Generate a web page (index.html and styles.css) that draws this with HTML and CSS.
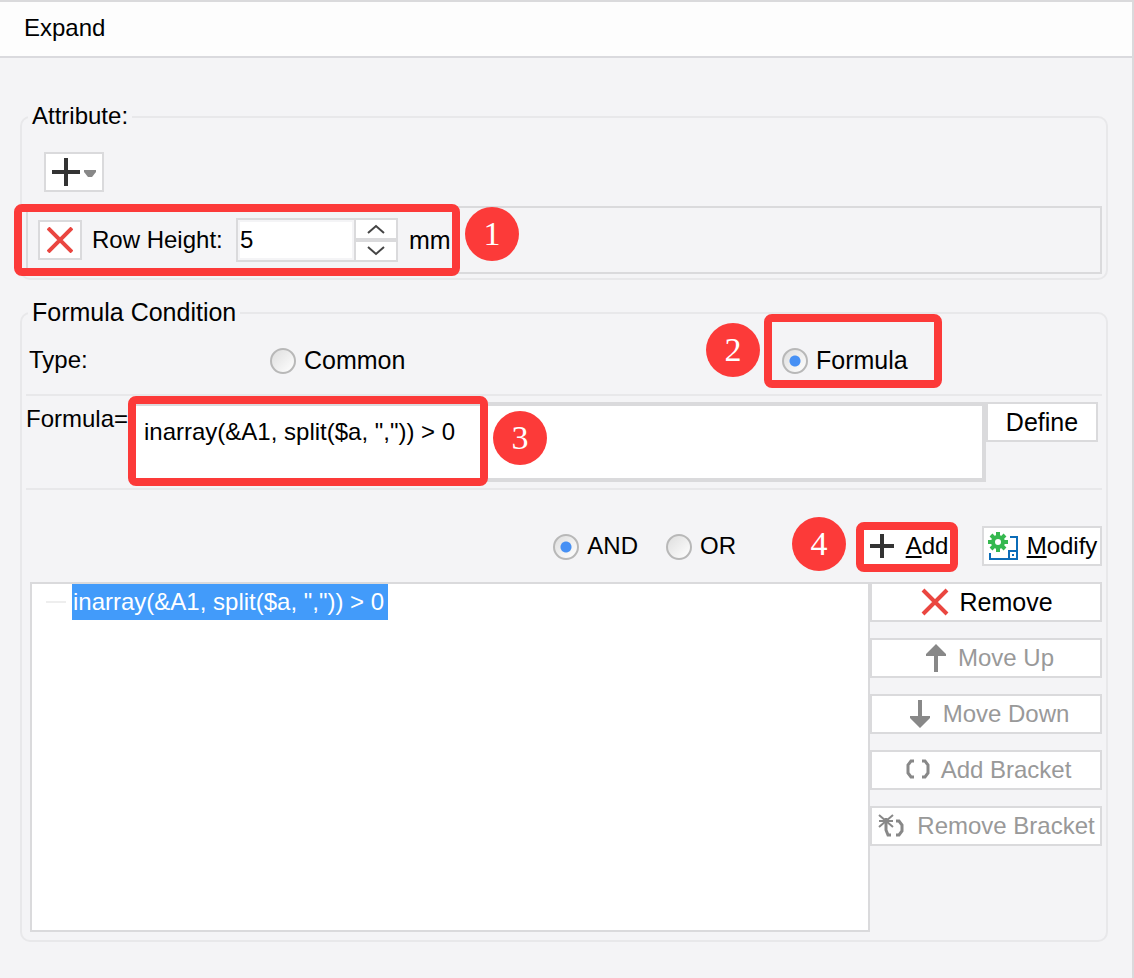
FILE: index.html
```html
<!DOCTYPE html>
<html lang="en">
<head>
<meta charset="utf-8">
<title>Expand</title>
<link rel="stylesheet" href="styles.css">
</head>
<body>
<main class="dialog">
  <header class="titlebar"><h1 class="title">Expand</h1></header>
  <form class="content">
    <fieldset class="group">
      <legend class="legend">Attribute:</legend>
      <div class="toolbar">
        <button type="button" class="btn btn-menu" aria-label="Add attribute">
          <svg width="28" height="28" viewBox="0 0 28 28"><path d="M14 0v28M0 14h28" stroke="#333" stroke-width="4"/></svg>
          <svg width="12" height="12" viewBox="0 0 12 12"><path d="M0 4h12v2l-4 5H4L0 6z" fill="#888"/></svg>
        </button>
      </div>
      <div class="attributes">
        <div class="attribute">
          <button type="button" class="btn btn-delete" aria-label="Delete row height">
            <svg width="26" height="26" viewBox="0 0 26 26"><path d="M1 1l24 24M25 1L1 25" stroke="#ea4640" stroke-width="4"/></svg>
          </button>
          <label class="attribute-label" for="row-height">Row Height:</label>
          <div class="spinner">
            <input class="spinner-input" id="row-height" type="text" value="5">
            <div class="spinner-buttons">
              <button type="button" class="step" aria-label="Increase"><svg width="18" height="10" viewBox="0 0 18 10"><path d="M1 9l8-7 8 7" fill="none" stroke="#444" stroke-width="2"/></svg></button>
              <button type="button" class="step" aria-label="Decrease"><svg width="18" height="10" viewBox="0 0 18 10"><path d="M1 1l8 7 8-7" fill="none" stroke="#444" stroke-width="2"/></svg></button>
            </div>
          </div>
          <span class="unit">mm</span>
          <span class="mark mark-attribute"></span>
          <span class="badge badge-attribute">1</span>
        </div>
      </div>
    </fieldset>

    <fieldset class="group group-fill">
      <legend class="legend wide">Formula Condition</legend>
      <div class="type-row" role="radiogroup" aria-labelledby="type-label">
        <span class="type-label" id="type-label">Type:</span>
        <label class="option wide"><input class="radio" type="radio" name="type">Common</label>
        <div class="anchor">
          <label class="option wide"><input class="radio" type="radio" name="type" checked>Formula</label>
          <span class="mark mark-type"></span>
          <span class="badge badge-type">2</span>
        </div>
      </div>

      <div class="formula-row">
        <label class="formula-label" for="formula">Formula=</label>
        <div class="formula-box">
          <textarea class="formula-input" id="formula" spellcheck="false">inarray(&amp;A1, split($a, ",")) &gt; 0</textarea>
          <span class="mark mark-formula"></span>
          <span class="badge badge-formula">3</span>
        </div>
        <button type="button" class="btn btn-define wide">Define</button>
      </div>

      <div class="join-row">
        <label class="option"><input class="radio" type="radio" name="join" checked>AND</label>
        <label class="option option-or"><input class="radio" type="radio" name="join">OR</label>
        <div class="anchor anchor-add">
          <button type="button" class="btn btn-add">
            <svg class="icon" viewBox="0 0 32 32"><path d="M16 4v24M4 16h24" stroke="#333" stroke-width="4"/></svg>
            <span><u>A</u>dd</span>
          </button>
          <span class="mark mark-add"></span>
          <span class="badge badge-add">4</span>
        </div>
        <button type="button" class="btn btn-modify">
          <svg class="icon" viewBox="0 0 32 32">
            <path d="M23 7h7v22H3v-6" fill="none" stroke="#0b6cb8" stroke-width="2"/>
            <path d="M22 21h8v8h-8z" fill="#fff" stroke="#0b6cb8" stroke-width="2"/>
            <path d="M25 24h2v2h-2z" fill="#0b6cb8"/>
            <g stroke="#35b84f" fill="none" stroke-width="4"><circle cx="11" cy="12" r="5"/><path d="M11 2v4M11 18v4M1 12h4M17 12h4M4 5l3 3M15 16l3 3M18 5l-3 3M7 16l-3 3"/></g>
          </svg>
          <span><u>M</u>odify</span>
        </button>
      </div>

      <div class="conditions">
        <ul class="tree" role="tree" aria-label="Conditions">
          <li class="node" role="treeitem" aria-selected="true"><span class="node-text">inarray(&amp;A1, split($a, ",")) &gt; 0</span></li>
        </ul>
        <div class="actions">
          <button type="button" class="btn wide">
            <svg class="icon" viewBox="0 0 32 32"><path d="M4 4l24 24M28 4L4 28" stroke="#ea4640" stroke-width="4"/></svg>Remove</button>
          <button type="button" class="btn" disabled>
            <svg class="icon" viewBox="0 0 32 32"><path d="M18 2l10 10v2h-8v16h-4V14H8v-2z" fill="#888"/></svg>Move Up</button>
          <button type="button" class="btn" disabled>
            <svg class="icon" viewBox="0 0 32 32"><path d="M17 30L7 20v-2h8V2h4v16h8v2z" fill="#888"/></svg>Move Down</button>
          <button type="button" class="btn" disabled>
            <svg class="icon" viewBox="0 0 32 32"><path d="M13 7h-3l-3 4v8l3 4h3M21 7h3l3 4v8l-3 4h-3" fill="none" stroke="#888" stroke-width="3"/></svg>Add Bracket</button>
          <button type="button" class="btn" disabled>
            <svg class="icon" viewBox="0 0 32 32"><path d="M2 5l14 12M16 5L2 17M2 11h14" fill="none" stroke="#888" stroke-width="2"/><path d="M9 8v12l2 5h3M19 11h3l3 4v6l-3 4h-3" fill="none" stroke="#888" stroke-width="3"/></svg>Remove Bracket</button>
        </div>
      </div>
    </fieldset>
  </form>
</main>
</body>
</html>
```
FILE: styles.css
```css
* { box-sizing: border-box; }

body {
  margin: 0;
  background: #f4f4f6;
  color: #000;
  font: 24px/28px "Liberation Sans", Arial, sans-serif;
}

button, input, textarea { font: inherit; color: inherit; }

svg { display: block; flex: none; }

.wide { font-size: 25px; }

.dialog {
  display: flex;
  flex-direction: column;
  min-height: 100vh;
  border-top: 2px solid #dadadc;
  border-right: 2px solid #dadadc;
}

.titlebar {
  padding: 12px 24px 14px;
  background: #fdfdfd;
  border-bottom: 2px solid #dadade;
}

.title { margin: 0; font-size: 24px; font-weight: 400; }

.content {
  display: flex;
  flex-direction: column;
  gap: 18px;
  padding: 44px 24px 36px 20px;
}

.group {
  min-width: 0;
  margin: 0;
  padding: 0 4px 4px;
  border: 2px solid #e8e8ea;
  border-radius: 10px;
}

.group-fill { padding-bottom: 8px; }

.legend { margin-left: 2px; padding: 0 4px 2px; }

.btn {
  display: flex;
  align-items: center;
  justify-content: center;
  gap: 8px;
  height: 40px;
  padding: 0;
  background: #fff;
  border: 2px solid #dadadc;
  white-space: nowrap;
}

.btn:disabled { color: #999; }

.btn u { text-decoration-thickness: 2px; text-underline-offset: 2px; }

.icon { width: 32px; height: 32px; }

.toolbar { padding: 20px 18px 14px; }

.btn-menu { width: 60px; gap: 4px; }

.attributes { display: flex; border: 2px solid #dadadc; }

.attribute {
  position: relative;
  display: flex;
  align-items: center;
  height: 64px;
  padding-left: 10px;
}

.btn-delete { width: 44px; }

.attribute-label { width: 154px; padding-left: 10px; }

.spinner {
  display: flex;
  width: 162px;
  height: 44px;
  border: 2px solid #dadadc;
  background: #dadadc;
}

.spinner-input {
  flex: 1;
  min-width: 0;
  padding: 0;
  border: 2px solid #f4f4f6;
  background: #fff;
}

.spinner-buttons {
  display: flex;
  flex-direction: column;
  gap: 4px;
  width: 42px;
  padding-left: 2px;
}

.step {
  flex: 1;
  display: flex;
  align-items: center;
  justify-content: center;
  padding: 0;
  border: 0;
  background: #fff;
}

.unit { width: 54px; padding-left: 11px; font-size: 25px; }

.anchor { position: relative; display: flex; justify-self: start; }

.option { display: flex; align-items: center; justify-self: start; gap: 8px; }

.radio {
  appearance: none;
  width: 26px;
  height: 26px;
  margin: 2px 0 0;
  border: 2px solid #b8b8b8;
  border-radius: 50%;
  background: linear-gradient(135deg, #dedede, #fff);
}

.radio:checked {
  background: radial-gradient(circle, #4690f4 5px, transparent 6px), linear-gradient(135deg, #dedede, #fff);
}

.type-row {
  display: grid;
  grid-template-columns: 244fr 512fr 320fr;
  align-items: center;
  height: 66px;
  padding-bottom: 2px;
}

.type-label { padding-left: 3px; }

.formula-row {
  display: flex;
  align-items: flex-start;
  padding: 6px 4px 6px 0;
  border-top: 2px solid #e8e8ea;
  border-bottom: 2px solid #e8e8ea;
}

.formula-label { width: 104px; padding-top: 3px; }

.formula-box { position: relative; flex: 1; }

.formula-input {
  display: block;
  width: 100%;
  height: 80px;
  padding: 12px 10px;
  border: 4px solid #dadadc;
  background: #fff;
  resize: none;
}

.btn-define { width: 112px; }

.join-row {
  display: flex;
  align-items: center;
  justify-content: flex-end;
  padding: 36px 0 16px;
}

.option-or { margin-left: 28px; }

.anchor-add { margin-left: 124px; }

.btn-add { width: 94px; }

.btn-modify { width: 120px; margin-left: 28px; }

.conditions { display: flex; padding-left: 4px; }

.tree {
  flex: 1;
  min-height: 350px;
  margin: 0;
  padding: 0 0 0 14px;
  border: 2px solid #dadadc;
  background: #fff;
  list-style: none;
}

.node { display: flex; align-items: center; gap: 6px; }

.node::before { content: ""; width: 20px; height: 2px; background: #eee; }

.node-text { padding: 4px 4px 4px 1px; background: #429bfa; color: #fff; }

.actions {
  display: flex;
  flex-direction: column;
  gap: 16px;
  width: 232px;
}

/* Numbered step annotations drawn over the controls */
.mark {
  position: absolute;
  border: 8px solid #fc3a39;
  border-radius: 8px;
  pointer-events: none;
}

.mark-attribute { inset: -4px -8px -4px -14px; }
.mark-type { inset: -32px -34px -14px -18px; }
.mark-formula { top: -6px; left: -2px; width: 360px; height: 90px; }
.mark-add { inset: -4px -4px -6px; }

.badge {
  position: absolute;
  width: 54px;
  height: 54px;
  border-radius: 50%;
  background: #fc3a39;
  color: #fff;
  font: 34px/54px "Liberation Serif", "Times New Roman", serif;
  text-align: center;
}

.badge-attribute { top: -1px; left: calc(100% + 13px); }
.badge-type { top: -23px; right: calc(100% + 22px); }
.badge-formula { top: 9px; left: 363px; }
.badge-add { top: -9px; right: calc(100% + 14px); }
```
